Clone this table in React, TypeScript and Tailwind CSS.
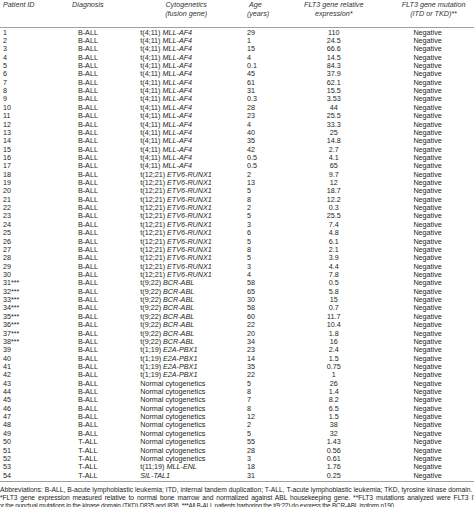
import React from "react";

type Row = { id: string; dx: string; t?: string; gene?: string; age: string; expr: string };

const rawRows: [string, string, string, string, string, string][] = [
  ["1", "B-ALL", "t(4;11)", "MLL-AF4", "29", "110"],
  ["2", "B-ALL", "t(4;11)", "MLL-AF4", "1", "24.5"],
  ["3", "B-ALL", "t(4;11)", "MLL-AF4", "15", "66.6"],
  ["4", "B-ALL", "t(4;11)", "MLL-AF4", "4", "14.5"],
  ["5", "B-ALL", "t(4;11)", "MLL-AF4", "0.1", "84.3"],
  ["6", "B-ALL", "t(4;11)", "MLL-AF4", "45", "37.9"],
  ["7", "B-ALL", "t(4;11)", "MLL-AF4", "61", "62.1"],
  ["8", "B-ALL", "t(4;11)", "MLL-AF4", "31", "15.5"],
  ["9", "B-ALL", "t(4;11)", "MLL-AF4", "0.3", "3.53"],
  ["10", "B-ALL", "t(4;11)", "MLL-AF4", "28", "44"],
  ["11", "B-ALL", "t(4;11)", "MLL-AF4", "23", "25.5"],
  ["12", "B-ALL", "t(4;11)", "MLL-AF4", "4", "33.3"],
  ["13", "B-ALL", "t(4;11)", "MLL-AF4", "40", "25"],
  ["14", "B-ALL", "t(4;11)", "MLL-AF4", "35", "14.8"],
  ["15", "B-ALL", "t(4;11)", "MLL-AF4", "42", "2.7"],
  ["16", "B-ALL", "t(4;11)", "MLL-AF4", "0.5", "4.1"],
  ["17", "B-ALL", "t(4;11)", "MLL-AF4", "0.5", "65"],
  ["18", "B-ALL", "t(12;21)", "ETV6-RUNX1", "2", "9.7"],
  ["19", "B-ALL", "t(12;21)", "ETV6-RUNX1", "13", "12"],
  ["20", "B-ALL", "t(12;21)", "ETV6-RUNX1", "5", "18.7"],
  ["21", "B-ALL", "t(12;21)", "ETV6-RUNX1", "8", "12.2"],
  ["22", "B-ALL", "t(12;21)", "ETV6-RUNX1", "2", "0.3"],
  ["23", "B-ALL", "t(12;21)", "ETV6-RUNX1", "5", "25.5"],
  ["24", "B-ALL", "t(12;21)", "ETV6-RUNX1", "3", "7.4"],
  ["25", "B-ALL", "t(12;21)", "ETV6-RUNX1", "6", "4.8"],
  ["26", "B-ALL", "t(12;21)", "ETV6-RUNX1", "5", "6.1"],
  ["27", "B-ALL", "t(12;21)", "ETV6-RUNX1", "8", "2.1"],
  ["28", "B-ALL", "t(12;21)", "ETV6-RUNX1", "5", "3.9"],
  ["29", "B-ALL", "t(12;21)", "ETV6-RUNX1", "3", "4.4"],
  ["30", "B-ALL", "t(12;21)", "ETV6-RUNX1", "4", "7.8"],
  ["31***", "B-ALL", "t(9;22)", "BCR-ABL", "58", "0.5"],
  ["32***", "B-ALL", "t(9;22)", "BCR-ABL", "65", "5.8"],
  ["33***", "B-ALL", "t(9;22)", "BCR-ABL", "30", "15"],
  ["34***", "B-ALL", "t(9;22)", "BCR-ABL", "58", "0.7"],
  ["35***", "B-ALL", "t(9;22)", "BCR-ABL", "60", "11.7"],
  ["36***", "B-ALL", "t(9;22)", "BCR-ABL", "22", "10.4"],
  ["37***", "B-ALL", "t(9;22)", "BCR-ABL", "20", "1.8"],
  ["38***", "B-ALL", "t(9;22)", "BCR-ABL", "34", "16"],
  ["39", "B-ALL", "t(1;19)", "E2A-PBX1", "23", "2.4"],
  ["40", "B-ALL", "t(1;19)", "E2A-PBX1", "14", "1.5"],
  ["41", "B-ALL", "t(1;19)", "E2A-PBX1", "35", "0.75"],
  ["42", "B-ALL", "t(1;19)", "E2A-PBX1", "22", "1"],
  ["43", "B-ALL", "Normal cytogenetics", "", "5", "26"],
  ["44", "B-ALL", "Normal cytogenetics", "", "8", "1.4"],
  ["45", "B-ALL", "Normal cytogenetics", "", "7", "8.2"],
  ["46", "B-ALL", "Normal cytogenetics", "", "8", "6.5"],
  ["47", "B-ALL", "Normal cytogenetics", "", "12", "1.5"],
  ["48", "B-ALL", "Normal cytogenetics", "", "2", "38"],
  ["49", "B-ALL", "Normal cytogenetics", "", "5", "32"],
  ["50", "T-ALL", "Normal cytogenetics", "", "55", "1.43"],
  ["51", "T-ALL", "Normal cytogenetics", "", "28", "0.56"],
  ["52", "T-ALL", "Normal cytogenetics", "", "3", "0.61"],
  ["53", "T-ALL", "t(11;19)", "MLL-ENL", "18", "1.76"],
  ["54", "T-ALL", "", "SIL-TAL1", "31", "0.25"],
];

const rows: Row[] = rawRows.map(([id, dx, t, gene, age, expr]) => ({ id, dx, t, gene, age, expr }));

export default function App() {
  return (
    <div
      className="w-[474px] h-[507px] overflow-hidden bg-white text-[#231f20] text-[7.2px] leading-none"
      style={{ fontFamily: '"Liberation Sans", Arial, sans-serif' }}
    >
      {/* header */}
      <div className="flex h-[28px] italic text-[#333] border-b border-[#a0a0a0] leading-[9px]">
        <div className="w-[64px] pl-[3px]">Patient ID</div>
        <div className="w-[50px] text-center">Diagnosis</div>
        <div className="w-[28px]" />
        <div className="w-[108px] pl-[10px]">
          <div className="w-[72px] text-center">
            Cytogenetics
            <br />
            (fusion gene)
          </div>
        </div>
        <div className="w-[40px]">
          <div className="pl-[2px]">Age</div>
          <div>(years)</div>
        </div>
        <div className="w-[96px] text-center">
          FLT3 gene relative
          <br />
          expression*
        </div>
        <div className="w-[94px] text-center pl-[12px] whitespace-nowrap">
          FLT3 gene mutation
          <br />
          (ITD or TKD)**
        </div>
      </div>

      {/* body */}
      <div className="border-b border-[#a0a0a0] pb-[2px]">
        {rows.map((r) => (
          <div key={r.id} className="flex h-[8.36px] items-center whitespace-nowrap">
            <div className="w-[64px] pl-[3px]">{r.id}</div>
            <div className="w-[50px] text-center">{r.dx}</div>
            <div className="w-[28px]" />
            <div className="w-[108px]">
              {r.t}
              {r.t && r.gene ? " " : ""}
              {r.gene && <span className="italic">{r.gene}</span>}
            </div>
            <div className="w-[40px]">{r.age}</div>
            <div className="w-[96px] text-center">{r.expr}</div>
            <div className="w-[94px] text-center">Negative</div>
          </div>
        ))}
      </div>

      {/* footnotes */}
      <div className="pt-[4px] text-[6.75px] leading-[8px] whitespace-nowrap">
        <div>
          Abbreviations: B-ALL, B-acute lymphoblastic leukemia; ITD, internal tandem duplication; T-ALL, T-acute
          lymphoblastic leukemia; TKD, tyrosine kinase domain.
        </div>
        <div className="w-[482px] [text-align-last:justify] tracking-[-0.1px]">
          *FLT3 gene expression measured relative to normal bone marrow and normalized against ABL housekeeping gene.
          **FLT3 mutations analyzed were FLT3 ITD
        </div>
        <div className="-ml-[3px] text-[6.4px] tracking-[-0.22px]">
          for the punctual mutations in the kinase domain (TKD) D835 and I836. ***All B-ALL patients harboring the
          t(9;22) do express the BCR-ABL isoform p190.
        </div>
      </div>
    </div>
  );
}
